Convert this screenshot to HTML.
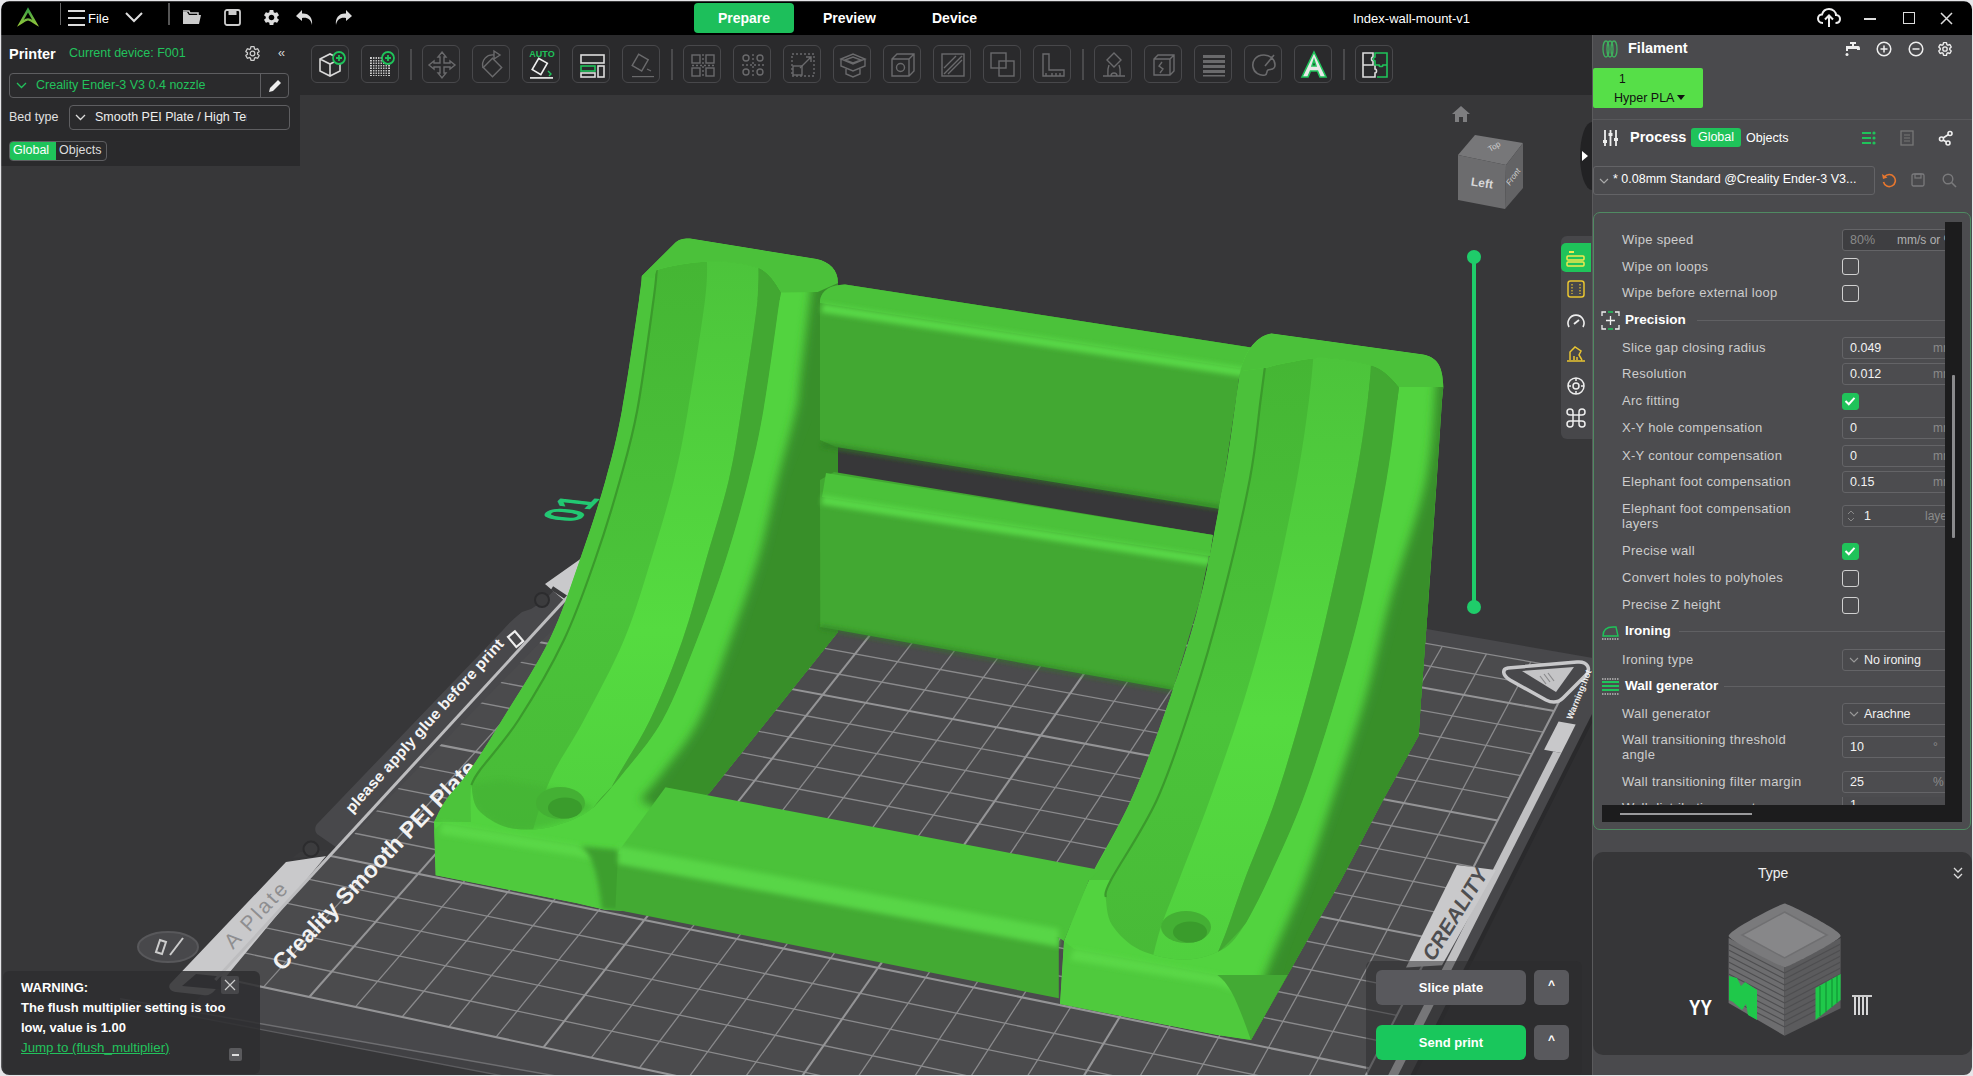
<!DOCTYPE html>
<html><head><meta charset="utf-8">
<style>
*{margin:0;padding:0;box-sizing:border-box}
html,body{width:1973px;height:1076px;overflow:hidden;background:#373739;font-family:"Liberation Sans",sans-serif;color:#ddd}
.a{position:absolute}
#scene{position:absolute;left:0;top:0}
.topbar{left:0;top:0;width:1973px;height:35px;background:#000;border-radius:8px 8px 0 0}
.tb{left:300px;top:35px;width:1292px;height:60px;background:#2a2a2c}
.lp{left:0;top:35px;width:300px;height:131px;background:#2a2a2c}
.ib{position:absolute;width:38px;height:38px;border:1.3px solid #48484b;border-radius:6px;top:45px}
.ib svg{position:absolute;left:0;top:0}
.sep{position:absolute;width:1.5px;background:#4a4a4c}
.rp{left:1592px;top:35px;width:381px;height:1041px;background:#4a4a4d;border-left:1px solid #5a5a5c}
.lbl{position:absolute;font-size:13px;color:#cdcdcd;white-space:nowrap;line-height:15px;letter-spacing:0.3px}
.hdr{position:absolute;font-size:13.5px;color:#fff;font-weight:bold;white-space:nowrap;line-height:15px}
.inp{position:absolute;left:1842px;width:112px;height:22px;border:1px solid #646467;border-radius:3px;background:#4a4a4d;font-size:12.5px;color:#f0f0f0;padding:3px 0 0 7px;white-space:nowrap;overflow:hidden}
.cb{position:absolute;left:1842px;width:17px;height:17px;border:1.6px solid #d0d0d0;border-radius:3px}
.cbon{background:#1fc35a;border-color:#1fc35a}
.unit{position:absolute;left:92px;top:3px;color:#8a8a8a;font-size:12px}
.wt{color:#fff;font-size:13.5px;white-space:nowrap;position:absolute}

</style></head><body>
<svg id="scene" width="1973" height="1076" viewBox="0 0 1973 1076">
<polygon points="1620.0,662.7 1272.5,1355.1 1600,1076 1600,726" fill="#2f2f31" />
<polygon points="165.6,1034.2 660.9,495.6 1620.0,662.7 1307.4,1285.6" fill="#48484b" />
<polygon points="120,1002.4 720,1117.6 720,1076 120,1076" fill="#363638"/>
<polygon points="120,998.7 720,1105 720,1117.6 120,1002.4" fill="#414144"/>
<path d="M120,998.7 L720,1105" stroke="#6e6e71" stroke-width="1.4"/><path d="M120,1002.4 L720,1117.6" stroke="#5c5c5f" stroke-width="1.4"/>
<polygon points="217.8,977.3 650.0,507.4 1575.6,669.6 1296.5,1209.4" fill="#4b4b4d" />
<g stroke="#8a8a8c" stroke-width="1.3"><line x1="217.8" y1="977.3" x2="650.0" y2="507.4"/><line x1="263.4" y1="987.1" x2="689.6" y2="514.3"/><line x1="241.0" y1="952.2" x2="1311.6" y2="1180.2"/><line x1="263.7" y1="927.4" x2="1326.4" y2="1151.5"/><line x1="355.5" y1="1006.9" x2="769.5" y2="528.3"/><line x1="286.1" y1="903.1" x2="1341.0" y2="1123.3"/><line x1="402.1" y1="1017.0" x2="809.7" y2="535.4"/><line x1="308.1" y1="879.2" x2="1355.3" y2="1095.6"/><line x1="448.9" y1="1027.0" x2="850.2" y2="542.5"/><line x1="496.0" y1="1037.2" x2="890.9" y2="549.6"/><line x1="351.0" y1="832.5" x2="1383.2" y2="1041.7"/><line x1="371.9" y1="809.8" x2="1396.8" y2="1015.4"/><line x1="591.3" y1="1057.7" x2="973.1" y2="564.0"/><line x1="392.5" y1="787.4" x2="1410.2" y2="989.6"/><line x1="639.4" y1="1068.0" x2="1014.5" y2="571.2"/><line x1="412.8" y1="765.3" x2="1423.3" y2="964.2"/><line x1="687.9" y1="1078.5" x2="1056.2" y2="578.5"/><line x1="736.7" y1="1089.0" x2="1098.1" y2="585.9"/><line x1="452.4" y1="722.2" x2="1448.9" y2="914.7"/><line x1="471.8" y1="701.2" x2="1461.3" y2="890.6"/><line x1="835.3" y1="1110.2" x2="1182.7" y2="600.7"/><line x1="490.8" y1="680.5" x2="1473.6" y2="866.8"/><line x1="885.1" y1="1120.9" x2="1225.3" y2="608.2"/><line x1="509.6" y1="660.1" x2="1485.7" y2="843.5"/><line x1="935.2" y1="1131.7" x2="1268.2" y2="615.7"/><line x1="985.8" y1="1142.6" x2="1311.3" y2="623.2"/><line x1="546.3" y1="620.2" x2="1509.3" y2="797.9"/><line x1="564.2" y1="600.7" x2="1520.8" y2="775.7"/><line x1="1087.9" y1="1164.5" x2="1398.4" y2="638.5"/><line x1="581.9" y1="581.5" x2="1532.1" y2="753.8"/><line x1="1139.5" y1="1175.6" x2="1442.3" y2="646.2"/><line x1="599.3" y1="562.5" x2="1543.2" y2="732.2"/><line x1="1191.4" y1="1186.8" x2="1486.5" y2="653.9"/><line x1="1243.8" y1="1198.1" x2="1530.9" y2="661.7"/><line x1="633.3" y1="525.5" x2="1565.0" y2="690.1"/><line x1="650.0" y1="507.4" x2="1575.6" y2="669.6"/></g>
<g stroke="#949496" stroke-width="2.1"><line x1="217.8" y1="977.3" x2="1296.5" y2="1209.4"/><line x1="309.3" y1="997.0" x2="729.4" y2="521.3"/><line x1="329.7" y1="855.7" x2="1369.4" y2="1068.4"/><line x1="543.5" y1="1047.4" x2="931.9" y2="556.8"/><line x1="432.8" y1="743.6" x2="1436.2" y2="939.2"/><line x1="785.8" y1="1099.5" x2="1140.3" y2="593.3"/><line x1="528.1" y1="640.0" x2="1497.6" y2="820.5"/><line x1="1036.6" y1="1153.5" x2="1354.7" y2="630.9"/><line x1="616.4" y1="543.9" x2="1554.2" y2="711.0"/><line x1="1296.5" y1="1209.4" x2="1575.6" y2="669.6"/></g>
<!-- A Plate strip -->
<path d="M170,984 L286,862 L326,856 L215,990 C212,994 208,996 203,995 L176,992 C170,991 168,987 170,984Z" fill="#c9c9cb"/>
<path d="M182,986 L196,974 L236,978 L226,990Z" fill="#3a3a3c"/>
<path d="M292,858 L300,852 L330,850 L326,856Z" fill="#3a3a3c"/>
<text x="0" y="0" font-family="Liberation Sans" font-size="21" fill="#8e8e90" letter-spacing="2.5" transform="translate(233,950) rotate(-47)">A Plate</text>
<!-- please apply glue tab -->
<path d="M317,834 C314,830 315,826 318,823 L503,630 C506,626 512,620 522,612 L531,609 L545,600 L600,540 L620,560 L357,831 L340,850Z" fill="#48484b"/>
<circle cx="311" cy="849" r="7.5" fill="#3c3c3e" stroke="#2c2c2e" stroke-width="2"/>
<circle cx="542" cy="600" r="7" fill="#3c3c3e" stroke="#2c2c2e" stroke-width="2"/>
<text x="0" y="0" font-family="Liberation Sans" font-size="15" font-weight="bold" fill="#f4f4f4" textLength="228" lengthAdjust="spacingAndGlyphs" transform="translate(352,814) rotate(-48)">please apply glue before print</text>
<rect x="0" y="0" width="9" height="13" fill="none" stroke="#eee" stroke-width="2.2" transform="translate(508,637) rotate(-40)"/>
<!-- back-left label -->
<polygon points="545,584 579,560 600,540 600,600 566,602" fill="#c9c9cb"/>
<path d="M552,588 L570,600" stroke="#3a3a3c" stroke-width="4"/>
<!-- Creality Smooth PEI Plate -->
<text x="0" y="0" font-family="Liberation Sans" font-size="23" font-weight="bold" fill="#f2f2f2" textLength="282" lengthAdjust="spacingAndGlyphs" transform="translate(282,972) rotate(-46)">Creality Smooth PEI Plate</text>
<!-- 01 -->
<text x="0" y="0" font-family="Liberation Sans" font-size="30" font-weight="bold" fill="#22c872" transform="matrix(0.72,-0.74,1.75,0.2,576.5,523)">01</text>
<!-- pencil circle -->
<ellipse cx="168" cy="947" rx="30" ry="15" fill="#48484b" stroke="#58585b" stroke-width="2"/>
<path d="M156 952 L160 940 L166 942 L162 954Z" fill="none" stroke="#ccc" stroke-width="2"/>
<path d="M170 955 L183 938" stroke="#ccc" stroke-width="2"/>
<!-- right side strips -->
<polygon points="1558.6,721.5 1575.7,724.6 1561.4,752.9 1544.1,749.8" fill="#c8c8ca"/>
<polygon points="1553.2,751.4 1561.4,752.9 1316.8,1235.6 1307.4,1233.6" fill="#c0c0c2"/>
<polygon points="1618.0,662.3 1621.9,663.0 1275.0,1355.6 1270.1,1354.5" fill="#2a2a2c"/>
<!-- CREALITY strip -->
<polygon points="1456.8,865 1495.8,870 1442,965.3 1406,967.4" fill="#c9c9cb"/>
<text x="0" y="0" font-family="Liberation Sans" font-size="21" font-weight="bold" fill="#4e4e50" textLength="104" lengthAdjust="spacingAndGlyphs" transform="translate(1433,963) rotate(-58) skewX(-10)">CREALITY</text>
<!-- warning triangle -->
<path d="M1508,668 L1577,662 C1588,661 1591,669 1586,675 L1563,698 C1558,703 1552,703 1546,700 L1510,680 C1502,675 1502,669 1508,668Z" fill="#48484b" stroke="#c8c8ca" stroke-width="3.5"/>
<path d="M1522,671 L1574,667 L1556,692Z" fill="#c4c4c6"/>
<path d="M1540,676 L1546,684 M1544,674 L1550,682 M1548,673 L1554,681" stroke="#8a8a8c" stroke-width="1.2"/>
<text x="0" y="0" font-family="Liberation Sans" font-size="9" font-weight="bold" fill="#eee" transform="translate(1572,720) rotate(-68)">Warning:hot</text>

<path d="M215.3 980.1 L650.0 507.4" stroke="#bdbdbf" stroke-width="3"/>
<defs>
<filter id="bl5" x="-20%" y="-20%" width="140%" height="140%"><feGaussianBlur stdDeviation="5"/></filter>
<filter id="bl3" x="-20%" y="-20%" width="140%" height="140%"><feGaussianBlur stdDeviation="2.5"/></filter>
<filter id="bl8" x="-20%" y="-20%" width="140%" height="140%"><feGaussianBlur stdDeviation="8"/></filter>
<linearGradient id="gLB" gradientUnits="userSpaceOnUse" x1="0" y1="262" x2="0" y2="830"><stop offset="0" stop-color="#4cc43b"/><stop offset="0.3" stop-color="#50cf3d"/><stop offset="0.65" stop-color="#55db40"/><stop offset="1" stop-color="#50d03e"/></linearGradient>
<linearGradient id="gRB" gradientUnits="userSpaceOnUse" x1="0" y1="358" x2="0" y2="960"><stop offset="0" stop-color="#4cc43b"/><stop offset="0.3" stop-color="#50cf3d"/><stop offset="0.6" stop-color="#55db40"/><stop offset="1" stop-color="#50d03e"/></linearGradient>
<linearGradient id="gLA" gradientUnits="userSpaceOnUse" x1="0" y1="262" x2="0" y2="830"><stop offset="0" stop-color="#45b634"/><stop offset="0.6" stop-color="#4bc43a"/><stop offset="1" stop-color="#48ba37"/></linearGradient>
<linearGradient id="gRA" gradientUnits="userSpaceOnUse" x1="0" y1="358" x2="0" y2="960"><stop offset="0" stop-color="#45b634"/><stop offset="0.6" stop-color="#4bc43a"/><stop offset="1" stop-color="#48ba37"/></linearGradient>
<linearGradient id="gbar" x1="0" y1="0" x2="0" y2="1"><stop offset="0" stop-color="#4cc23b"/><stop offset="0.35" stop-color="#5ad848"/><stop offset="1" stop-color="#45ae35"/></linearGradient>
</defs>
<clipPath id="clL"><path d="M641.8,276 L676,242 C680,239 685,238.6 690,238.6 L816.5,259 C830,262 838,270 838,283 L838,632 L708.7,794 L690,800 L640,860 L640,912 L605,909.8 L576,903 L435.6,875.2 L434,822 C436.0,818.3 440.0,808.7 446.0,800.0 C452.0,791.3 460.7,783.3 470.0,770.0 C479.3,756.7 488.8,741.7 502.0,720.0 C515.2,698.3 536.3,666.7 549.3,640.0 C562.3,613.3 570.4,586.7 579.8,560.0 C589.2,533.3 598.6,505.0 605.6,480.0 C612.6,455.0 616.4,440.0 622.0,410.0 C627.6,380.0 635.7,322.3 639.0,300.0 C642.3,277.7 641.3,280.0 641.8,276.0 Z"/></clipPath>
<g clip-path="url(#clL)">
<rect x="420" y="230" width="430" height="690" fill="#52d33f"/>
<path d="M812.0,283.0 C810.0,299.2 802.7,358.8 800.0,380.0 C797.3,401.2 799.8,393.3 796.0,410.0 C792.2,426.7 783.8,455.0 777.4,480.0 C771.0,505.0 765.6,533.3 757.7,560.0 C749.8,586.7 739.8,613.3 730.0,640.0 C720.2,666.7 709.9,698.3 699.0,720.0 C688.1,741.7 674.3,756.7 664.5,770.0 C654.7,783.3 644.1,795.0 640.0,800.0 L700,830 L860,640 L860,270 Z" fill="#388f29" filter="url(#bl5)"/>
<polygon points="812.0,420.0 790.0,480.0 771.0,560.0 744.0,640.0 713.0,720.0 680.0,770.0 660.0,800.0 708.7,794.0 838.0,632.0 838.0,420.0" fill="#388f29" />
<clipPath id="clLg"><path d="M781,292.5 C775,280 765,270 759,268.3 C740,262 720,261 708.7,261.8 C690,262 670,266 656.7,270 C656.2,275.0 656.7,276.7 653.5,300.0 C650.3,323.3 642.9,380.0 637.3,410.0 C631.7,440.0 627.0,455.0 620.0,480.0 C613.0,505.0 604.4,533.3 595.0,560.0 C585.6,586.7 576.6,613.3 563.9,640.0 C551.1,666.7 532.5,698.3 518.5,720.0 C504.5,741.7 487.9,759.2 480.0,770.0 C472.1,780.8 472.8,782.5 471.3,785.0 C472.4,789.1 472.1,802.4 478.0,809.4 C483.9,816.4 496.2,824.1 507.0,827.3 C517.8,830.5 531.2,829.9 542.7,828.4 C554.2,826.9 567.5,821.9 576.0,818.3 C584.5,814.7 591.0,808.9 594.0,807.0 C598.5,801.8 609.6,790.5 621.0,776.0 C632.4,761.5 649.9,742.7 662.6,720.0 C675.3,697.3 686.5,666.7 697.0,640.0 C707.5,613.3 717.1,586.7 725.7,560.0 C734.3,533.3 742.2,505.0 748.5,480.0 C754.8,455.0 758.3,440.0 763.5,410.0 C768.7,380.0 776.7,319.6 779.6,300.0 C782.5,280.4 780.8,293.8 781.0,292.5 Z"/></clipPath>
</g>
<g clip-path="url(#clLg)">
<rect x="450" y="250" width="350" height="600" fill="url(#gLA)"/>
<path d="M707.0,255.0 C706.7,262.5 708.2,274.2 705.0,300.0 C701.8,325.8 693.2,380.0 688.0,410.0 C682.8,440.0 680.2,455.0 674.0,480.0 C667.8,505.0 659.3,533.3 651.0,560.0 C642.7,586.7 635.2,613.3 624.0,640.0 C612.8,666.7 596.3,696.7 584.0,720.0 C571.7,743.3 559.0,760.0 550.0,780.0 C541.0,800.0 533.3,830.0 530.0,840.0 L590.0,840.0 C593.3,831.7 600.0,810.0 610.0,790.0 C620.0,770.0 637.9,745.0 650.0,720.0 C662.1,695.0 673.2,666.7 682.5,640.0 C691.8,613.3 698.3,586.7 706.0,560.0 C713.7,533.3 722.9,505.0 728.8,480.0 C734.7,455.0 736.6,440.0 741.4,410.0 C746.2,380.0 754.9,325.8 757.6,300.0 C760.3,274.2 757.6,262.5 757.6,255.0 Z" fill="url(#gLB)" />
<path d="M757.6,255.0 C757.6,262.5 760.3,274.2 757.6,300.0 C754.9,325.8 746.2,380.0 741.4,410.0 C736.6,440.0 734.7,455.0 728.8,480.0 C722.9,505.0 713.7,533.3 706.0,560.0 C698.3,586.7 691.8,613.3 682.5,640.0 C673.2,666.7 662.1,695.0 650.0,720.0 C637.9,745.0 620.0,770.0 610.0,790.0 C600.0,810.0 593.3,831.7 590.0,840.0 L580.0,840.0 C582.3,834.5 587.2,817.7 594.0,807.0 C600.8,796.3 609.6,790.5 621.0,776.0 C632.4,761.5 649.9,742.7 662.6,720.0 C675.3,697.3 686.5,666.7 697.0,640.0 C707.5,613.3 717.1,586.7 725.7,560.0 C734.3,533.3 742.2,505.0 748.5,480.0 C754.8,455.0 758.3,440.0 763.5,410.0 C768.7,380.0 776.7,319.6 779.6,300.0 C782.5,280.4 780.8,293.8 781.0,292.5 Z" fill="#42a832" />
<path d="M471,785 C470,805 480,815 507,827.3 C530,832 560,826 594,807 L560,790 L500,780Z" fill="#45b335" opacity="0.6" filter="url(#bl3)"/>
</g>
<g clip-path="url(#clL)">
<path d="M641.8,276.0 C641.3,280.0 642.3,277.7 639.0,300.0 C635.7,322.3 627.6,380.0 622.0,410.0 C616.4,440.0 612.6,455.0 605.6,480.0 C598.6,505.0 589.2,533.3 579.8,560.0 C570.4,586.7 562.3,613.3 549.3,640.0 C536.3,666.7 515.2,698.3 502.0,720.0 C488.8,741.7 479.3,756.7 470.0,770.0 C460.7,783.3 452.0,791.3 446.0,800.0 C440.0,808.7 436.0,818.3 434.0,822.0 L471.0,822.0 C471.1,815.8 469.8,793.7 471.3,785.0 C472.8,776.3 472.1,780.8 480.0,770.0 C487.9,759.2 504.5,741.7 518.5,720.0 C532.5,698.3 551.1,666.7 563.9,640.0 C576.6,613.3 585.6,586.7 595.0,560.0 C604.4,533.3 613.0,505.0 620.0,480.0 C627.0,455.0 631.7,440.0 637.3,410.0 C642.9,380.0 650.3,323.3 653.5,300.0 C656.7,276.7 656.2,275.0 656.7,270.0 Z" fill="#4cc43b" />
<path d="M656.7,270.0 C656.2,275.0 656.7,276.7 653.5,300.0 C650.3,323.3 642.9,380.0 637.3,410.0 C631.7,440.0 627.0,455.0 620.0,480.0 C613.0,505.0 604.4,533.3 595.0,560.0 C585.6,586.7 576.6,613.3 563.9,640.0 C551.1,666.7 532.5,698.3 518.5,720.0 C504.5,741.7 487.9,759.2 480.0,770.0 C472.1,780.8 472.8,782.5 471.3,785.0" fill="none" stroke="#3b9a2c" stroke-width="2.2"/>
<path d="M641.8,276 L676,242 C680,239 685,238.6 690,238.6 L816.5,259 C830,262 838,270 838,283 L817.7,292 L781,292.5 C775,280 765,270 759,268.3 C740,262 720,261 708.7,261.8 C690,262 670,266 656.7,270 L653.5,278 Z" fill="#4bc13a"/>
<polygon points="759.0,268.3 781.0,292.5 779.6,300.0 757.6,300.0" fill="#42a832" />
<polygon points="442.0,822.8 576.0,845.0 598.0,852.0 617.0,856.0 617.0,910.0 605.0,909.8 576.0,903.0 435.6,875.2 434.0,830.0" fill="#4fca3d" />
<path d="M442,822.8 L576,845 L598,852 L600,862 L576,856 L440,834Z" fill="#5ad847" filter="url(#bl3)"/>
<path d="M580,846 C592,852 598,875 602,909.8 L640,912 L640,856 L620,850Z" fill="#3d9f2f" filter="url(#bl3)"/>
</g>
<ellipse cx="560.5" cy="803" rx="24.5" ry="16" fill="#44b034"/>
<ellipse cx="565" cy="808" rx="17" ry="10.5" fill="#3a9c2c"/>
<path d="M820,440 L820,300 C822,290 830,285 845,284.4 L1256,348.3 L1240,371 L1236,400 L1224,480 L1220,509 L836,447Z" fill="#42a832"/>
<path d="M820,303 L820,300 C822,290 830,285 845,284.4 L1256,348.3 L1250,370Z" fill="#4bc23a"/>
<path d="M822,308 L1248,373" stroke="#59d847" stroke-width="9" filter="url(#bl3)"/>
<path d="M822,445 L1222,508" stroke="#2e7d22" stroke-width="3.5" filter="url(#bl3)"/>
<polygon points="834.0,472.0 1213.0,535.0 1200.0,600.0 1173.0,690.0 820.2,627.0 820.0,480.0" fill="#42a832" />
<polygon points="826.0,473.0 1213.0,535.0 1210.0,556.0 822.0,497.0" fill="#4bc23a" />
<path d="M822,500 L1210,561" stroke="#59d847" stroke-width="9" filter="url(#bl3)"/>
<path d="M820.2,627 L1173,690" stroke="#2e7d22" stroke-width="3" filter="url(#bl3)"/>
<clipPath id="clR"><path d="M1240.3,371.3 C1245,350 1258,335 1271.5,333.4 L1423,354.6 C1436,357 1443,365 1443.3,387 L1442,400 L1436.7,480 L1428.4,600 L1421,700 L1418.6,735.8 L1383,800 L1341,880 L1251,1040 L1217.4,1035 L1060,1004 L1064,941 C1068.2,930.8 1077.8,903.5 1089.0,880.0 C1100.2,856.5 1117.6,830.0 1131.0,800.0 C1144.4,770.0 1157.9,733.3 1169.4,700.0 C1180.9,666.7 1190.9,636.7 1200.0,600.0 C1209.1,563.3 1218.0,513.3 1224.0,480.0 C1230.0,446.7 1233.3,418.1 1236.0,400.0 C1238.7,381.9 1239.6,376.1 1240.3,371.3 Z"/></clipPath>
<g clip-path="url(#clR)">
<rect x="1050" y="320" width="400" height="730" fill="#52d33f"/>
<path d="M1436.0,380.0 C1434.3,396.7 1433.7,443.3 1426.0,480.0 C1418.3,516.7 1400.2,563.3 1390.0,600.0 C1379.8,636.7 1374.4,666.7 1364.7,700.0 C1355.0,733.3 1342.0,770.0 1332.0,800.0 C1322.0,830.0 1314.2,855.0 1304.7,880.0 C1295.2,905.0 1283.3,930.0 1275.0,950.0 C1266.7,970.0 1258.3,991.7 1255.0,1000.0 L1240,1060 L1460,1060 L1460,370 Z" fill="#388f29" filter="url(#bl5)"/>
<polygon points="1404.0,600.0 1378.0,700.0 1345.0,800.0 1318.0,880.0 1290.0,950.0 1265.0,1040.0 1460.0,1060.0 1460.0,600.0" fill="#388f29" />
</g>
<clipPath id="clRg"><path d="M1398.7,387 C1390,375 1380,368 1372,365.7 C1350,360 1330,357 1316,358 C1300,360 1280,364 1264.8,368 C1264.1,373.3 1263.1,381.3 1260.6,400.0 C1258.1,418.7 1256.1,446.7 1249.7,480.0 C1243.3,513.3 1231.5,563.3 1222.0,600.0 C1212.5,636.7 1203.9,666.7 1193.0,700.0 C1182.1,733.3 1170.5,770.0 1156.8,800.0 C1143.1,830.0 1119.5,863.8 1111.0,880.0 C1102.5,896.2 1106.4,894.2 1105.5,897.0 C1106.6,901.7 1106.2,916.2 1112.0,925.0 C1117.8,933.8 1127.7,944.2 1140.0,950.0 C1152.3,955.8 1171.8,959.9 1186.0,959.6 C1200.2,959.3 1215.0,954.1 1225.0,948.0 C1235.0,941.9 1242.5,927.2 1246.0,923.0 C1249.7,915.8 1258.5,900.5 1268.0,880.0 C1277.5,859.5 1291.5,830.0 1302.8,800.0 C1314.0,770.0 1325.5,733.3 1335.5,700.0 C1345.5,666.7 1354.2,636.7 1362.7,600.0 C1371.2,563.3 1380.7,513.3 1386.5,480.0 C1392.3,446.7 1395.4,415.5 1397.4,400.0 C1399.4,384.5 1398.5,389.2 1398.7,387.0 Z"/></clipPath>
<g clip-path="url(#clRg)">
<rect x="1090" y="350" width="320" height="620" fill="url(#gRA)"/>
<path d="M1314.0,350.0 C1313.2,358.3 1311.9,378.3 1309.0,400.0 C1306.1,421.7 1303.0,446.7 1296.8,480.0 C1290.5,513.3 1280.3,563.3 1271.5,600.0 C1262.7,636.7 1254.3,666.7 1244.0,700.0 C1233.7,733.3 1220.5,770.0 1209.7,800.0 C1198.9,830.0 1187.3,858.3 1179.0,880.0 C1170.7,901.7 1164.8,915.0 1160.0,930.0 C1155.2,945.0 1151.7,963.3 1150.0,970.0 L1210.0,970.0 C1212.5,964.2 1219.2,950.0 1225.0,935.0 C1230.8,920.0 1236.1,902.5 1244.5,880.0 C1252.9,857.5 1265.2,830.0 1275.4,800.0 C1285.6,770.0 1296.3,733.3 1305.4,700.0 C1314.5,666.7 1321.7,636.7 1330.0,600.0 C1338.3,563.3 1349.1,513.3 1355.4,480.0 C1361.7,446.7 1365.0,421.7 1367.8,400.0 C1370.6,378.3 1371.3,358.3 1372.0,350.0 Z" fill="url(#gRB)" />
<path d="M1372.0,350.0 C1371.3,358.3 1370.6,378.3 1367.8,400.0 C1365.0,421.7 1361.7,446.7 1355.4,480.0 C1349.1,513.3 1338.3,563.3 1330.0,600.0 C1321.7,636.7 1314.5,666.7 1305.4,700.0 C1296.3,733.3 1285.6,770.0 1275.4,800.0 C1265.2,830.0 1252.9,857.5 1244.5,880.0 C1236.1,902.5 1230.8,920.0 1225.0,935.0 C1219.2,950.0 1212.5,964.2 1210.0,970.0 L1200.0,970.0 C1207.7,962.2 1234.7,938.0 1246.0,923.0 C1257.3,908.0 1258.5,900.5 1268.0,880.0 C1277.5,859.5 1291.5,830.0 1302.8,800.0 C1314.0,770.0 1325.5,733.3 1335.5,700.0 C1345.5,666.7 1354.2,636.7 1362.7,600.0 C1371.2,563.3 1380.7,513.3 1386.5,480.0 C1392.3,446.7 1395.4,415.5 1397.4,400.0 C1399.4,384.5 1398.5,389.2 1398.7,387.0 Z" fill="#42a832" />
</g>
<g clip-path="url(#clR)">
<path d="M1240.3,371.3 C1239.6,376.1 1238.7,381.9 1236.0,400.0 C1233.3,418.1 1230.0,446.7 1224.0,480.0 C1218.0,513.3 1209.1,563.3 1200.0,600.0 C1190.9,636.7 1180.9,666.7 1169.4,700.0 C1157.9,733.3 1144.4,770.0 1131.0,800.0 C1117.6,830.0 1096.0,866.7 1089.0,880.0 L1111.0,880.0 C1118.6,866.7 1143.1,830.0 1156.8,800.0 C1170.5,770.0 1182.1,733.3 1193.0,700.0 C1203.9,666.7 1212.5,636.7 1222.0,600.0 C1231.5,563.3 1243.3,513.3 1249.7,480.0 C1256.1,446.7 1258.1,418.7 1260.6,400.0 C1263.1,381.3 1264.1,373.3 1264.8,368.0 Z" fill="#4bc13a" />
<path d="M1264.8,368.0 C1264.1,373.3 1263.1,381.3 1260.6,400.0 C1258.1,418.7 1256.1,446.7 1249.7,480.0 C1243.3,513.3 1231.5,563.3 1222.0,600.0 C1212.5,636.7 1203.9,666.7 1193.0,700.0 C1182.1,733.3 1170.5,770.0 1156.8,800.0 C1143.1,830.0 1119.5,863.8 1111.0,880.0 C1102.5,896.2 1106.4,894.2 1105.5,897.0" fill="none" stroke="#3b9a2c" stroke-width="2.2"/>
<path d="M1240.3,371.3 C1245,350 1258,335 1271.5,333.4 L1423,354.6 C1436,357 1443,365 1443.3,387 L1399,387 C1390,375 1380,368 1372,365.7 C1350,360 1330,357 1316,358 C1300,360 1280,364 1264.8,368 Z" fill="#4bc13a"/>
<polygon points="1372.0,365.7 1399.0,387.0 1397.4,400.0 1367.8,400.0" fill="#42a832" />
<polygon points="1074.0,949.0 1217.4,975.0 1236.0,982.0 1251.0,1040.0 1217.4,1035.0 1060.0,1004.0 1064.0,941.0" fill="#4fca3d" />
<path d="M1074,949 L1217.4,975 L1236,982 L1236,992 L1217,985 L1070,960Z" fill="#5ad847" filter="url(#bl3)"/>
<path d="M1217.4,975 C1232,985 1240,1010 1251,1040 L1290,1040 L1290,975Z" fill="#43aa34"/>
</g>
<ellipse cx="1186" cy="927" rx="25" ry="16" fill="#44b034"/>
<ellipse cx="1190" cy="932" rx="17" ry="10.5" fill="#3a9c2c"/>
<polygon points="665.5,787.3 1100.0,870.0 1089.0,880.0 1064.0,941.0 1058.8,937.4 618.0,853.8 619.5,850.0" fill="#4bc23a" />
<polygon points="618.0,853.8 1058.8,937.4 1058.8,998.2 615.3,909.5" fill="#43aa33" />
<path d="M618,846 L1058.8,929 L1058.8,947 L618,864Z" fill="#58d647" filter="url(#bl3)"/>
</svg>
<div class="a topbar"></div>
<!-- logo -->
<svg class="a" style="left:0;top:0" width="60" height="35" viewBox="0 0 60 35"><defs><linearGradient id="lg" x1="0" y1="0" x2="0" y2="1"><stop offset="0" stop-color="#2f9a45"/><stop offset="1" stop-color="#9ccc3a"/></linearGradient></defs><path fill-rule="evenodd" fill="url(#lg)" d="M28,7.3 L39,26.8 C35,24.5 31.5,21.5 28,20.5 C24.5,21.5 21,24.5 17,26.8 Z M28,12.5 L32.3,20 C31,19 29.5,18.3 28,18.3 C26.5,18.3 25,19 23.7,20 Z"/></svg>
<div class="a" style="left:60px;top:3px;width:1.2px;height:22px;background:#666"></div>
<svg class="a" style="left:68px;top:9px" width="18" height="18" viewBox="0 0 18 18"><rect x="0" y="1" width="17" height="2" fill="#ddd"/><rect x="0" y="8" width="17" height="2" fill="#ddd"/><rect x="0" y="15" width="17" height="2" fill="#ddd"/></svg>
<div class="a" style="left:88px;top:11px;font-size:13px;color:#fff">File</div>
<svg class="a" style="left:125px;top:12px" width="18" height="11" viewBox="0 0 18 11"><path d="M1 1 L9 9 L17 1" stroke="#ddd" stroke-width="2" fill="none"/></svg>
<div class="a" style="left:168px;top:3px;width:1.5px;height:22px;background:#555"></div>
<svg class="a" style="left:182px;top:9px" width="20" height="17" viewBox="0 0 20 17"><path d="M1 3 L1 15 L17 15 L19 6 L7 6 L5 3Z" fill="#ccc"/><path d="M1 2 L7 2 L8 4 L16 4 L16 6" stroke="#ccc" stroke-width="1.5" fill="none"/></svg>
<svg class="a" style="left:224px;top:9px" width="17" height="17" viewBox="0 0 17 17"><rect x="1" y="1" width="15" height="15" rx="2" fill="none" stroke="#ccc" stroke-width="1.8"/><rect x="4.5" y="1" width="8" height="5" fill="#ccc"/></svg>
<svg class="a" style="left:262px;top:8px" width="19" height="19" viewBox="0 0 24 24"><path fill="#ddd" d="M19.14 12.94c.04-.3.06-.61.06-.94 0-.32-.02-.64-.07-.94l2.03-1.58a.49.49 0 0 0 .12-.61l-1.92-3.32a.49.49 0 0 0-.59-.22l-2.39.96c-.5-.38-1.03-.7-1.62-.94l-.36-2.54a.48.48 0 0 0-.48-.41h-3.84c-.24 0-.43.17-.47.41l-.36 2.54c-.59.24-1.13.57-1.62.94l-2.39-.96a.48.48 0 0 0-.59.22L2.74 8.87c-.12.21-.08.47.12.61l2.03 1.58c-.05.3-.09.63-.09.94s.02.64.07.94l-2.03 1.58a.49.49 0 0 0-.12.61l1.92 3.32c.12.22.37.29.59.22l2.39-.96c.5.38 1.03.7 1.62.94l.36 2.54c.05.24.24.41.48.41h3.84c.24 0 .44-.17.47-.41l.36-2.54c.59-.24 1.13-.56 1.62-.94l2.39.96c.22.08.47 0 .59-.22l1.92-3.32c.12-.22.07-.47-.12-.61l-2.01-1.58zM12 15.6c-1.98 0-3.6-1.62-3.6-3.6s1.62-3.6 3.6-3.6 3.6 1.62 3.6 3.6-1.62 3.6-3.6 3.6z"/></svg>
<svg class="a" style="left:295px;top:9px" width="19" height="17" viewBox="0 0 19 17"><path d="M7 1 L1 7 L7 12 L7 9 C12 8 16 10 17 16 C18 9 14 4 7 4.5Z" fill="#ddd"/></svg>
<svg class="a" style="left:334px;top:9px" width="19" height="17" viewBox="0 0 19 17"><path d="M12 1 L18 7 L12 12 L12 9 C7 8 3 10 2 16 C1 9 5 4 12 4.5Z" fill="#ddd"/></svg>
<div class="a" style="left:694px;top:3px;width:100px;height:30px;background:#1dbf5b;border-radius:4px;color:#fff;font-weight:bold;font-size:14px;text-align:center;line-height:30px">Prepare</div>
<div class="a" style="left:823px;top:10px;color:#fff;font-weight:bold;font-size:14px">Preview</div>
<div class="a" style="left:932px;top:10px;color:#fff;font-weight:bold;font-size:14px">Device</div>
<div class="a" style="left:1353px;top:11px;color:#fff;font-size:13px">Index-wall-mount-v1</div>
<svg class="a" style="left:1817px;top:8px" width="24" height="20" viewBox="0 0 24 20"><path d="M6 15 C2 15 1 12 1 10.5 C1 8 3 6.5 5 6.5 C6 3 9 1 12 1 C16 1 19 4 19 7 C22 7 23 9.5 23 11 C23 13.5 21 15 18.5 15" stroke="#eee" stroke-width="2" fill="none"/><path d="M12 19 L12 8 M8 11.5 L12 7.5 L16 11.5" stroke="#eee" stroke-width="2" fill="none"/></svg>
<div class="a" style="left:1864px;top:18px;width:12px;height:1.5px;background:#ddd"></div>
<div class="a" style="left:1903px;top:12px;width:12px;height:12px;border:1.5px solid #ddd"></div>
<svg class="a" style="left:1940px;top:12px" width="13" height="13" viewBox="0 0 13 13"><path d="M1 1 L12 12 M12 1 L1 12" stroke="#ddd" stroke-width="1.5"/></svg>

<div class="a tb"></div>
<div class="a lp"></div>
<!-- toolbar buttons -->
<div class="ib" style="left:311px"><svg width="38" height="38" viewBox="0 0 38 38"><path d="M8 13 L18 8 L28 13 L28 25 L18 30 L8 25Z M8 13 L18 18 L28 13 M18 18 L18 30" stroke="#d8d8d8" stroke-width="1.6" fill="none"/><circle cx="27" cy="12" r="6" fill="#2a2a2c" stroke="#1fc35a" stroke-width="1.8"/><path d="M27 9 L27 15 M24 12 L30 12" stroke="#1fc35a" stroke-width="1.8"/></svg></div>
<div class="ib" style="left:361px"><svg width="38" height="38" viewBox="0 0 38 38"><g fill="#d0d0d0"><rect x="8" y="11" width="20" height="19"/></g><g stroke="#2a2a2c" stroke-width="1.2"><path d="M10.5 11v19M13 11v19M15.5 11v19M18 11v19M20.5 11v19M23 11v19M25.5 11v19M8 13.5h20M8 16h20M8 18.5h20M8 21h20M8 23.5h20M8 26h20M8 28.5h20"/></g><circle cx="26" cy="12" r="6" fill="#2a2a2c" stroke="#1fc35a" stroke-width="1.8"/><path d="M26 9 L26 15 M23 12 L29 12" stroke="#1fc35a" stroke-width="1.8"/></svg></div>
<div class="sep" style="left:410px;top:49px;height:31px"></div>
<div class="ib" style="left:422px"><svg width="38" height="38" viewBox="0 0 38 38"><path d="M19 6 L23 11 L21 11 L21 17 L27 17 L27 15 L32 19 L27 23 L27 21 L21 21 L21 27 L23 27 L19 32 L15 27 L17 27 L17 21 L11 21 L11 23 L6 19 L11 15 L11 17 L17 17 L17 11 L15 11Z" stroke="#6a6a6c" stroke-width="1.4" fill="none"/></svg></div>
<div class="ib" style="left:472px"><svg width="38" height="38" viewBox="0 0 38 38"><path d="M10 22 C8 14 14 8 21 9" stroke="#6a6a6c" stroke-width="1.4" fill="none"/><path d="M21 5 L27 9 L21 13Z" fill="none" stroke="#6a6a6c" stroke-width="1.4"/><rect x="13" y="15" width="13" height="13" transform="rotate(45 19.5 21.5)" fill="none" stroke="#6a6a6c" stroke-width="1.4"/></svg></div>
<div class="ib" style="left:522px"><svg width="38" height="38" viewBox="0 0 38 38"><text x="19" y="11" font-size="9" font-weight="bold" fill="#1fc35a" text-anchor="middle" font-family="Liberation Sans">AUTO</text><rect x="12" y="14" width="10" height="13" transform="rotate(30 17 20)" fill="none" stroke="#eee" stroke-width="1.6"/><path d="M25 25 L28 28 L26 30" stroke="#1fc35a" stroke-width="1.4" fill="none"/><rect x="7" y="31" width="23" height="1.8" fill="#ddd"/></svg></div>
<div class="ib" style="left:572px"><svg width="38" height="38" viewBox="0 0 38 38"><rect x="8" y="9" width="23" height="8" fill="none" stroke="#ddd" stroke-width="1.6"/><rect x="8" y="20" width="14" height="5" fill="none" stroke="#1fc35a" stroke-width="1.6"/><rect x="8" y="27" width="14" height="4" fill="none" stroke="#ddd" stroke-width="1.6"/><rect x="25" y="20" width="6" height="11" fill="none" stroke="#ddd" stroke-width="1.6"/></svg></div>
<div class="ib" style="left:622px"><svg width="38" height="38" viewBox="0 0 38 38"><rect x="12" y="10" width="11" height="13" transform="rotate(30 17 16)" fill="none" stroke="#6a6a6c" stroke-width="1.4"/><path d="M24 23 L28 25" stroke="#6a6a6c" stroke-width="1.2"/><rect x="9" y="30" width="22" height="1.2" fill="#6a6a6c"/></svg></div>
<div class="sep" style="left:671px;top:49px;height:31px"></div>
<div class="ib" style="left:683px"><svg width="38" height="38" viewBox="0 0 38 38"><g fill="none" stroke="#6a6a6c" stroke-width="1.4"><rect x="8" y="9" width="8" height="8"/><rect x="22" y="9" width="8" height="8"/><rect x="8" y="22" width="8" height="8"/><rect x="22" y="22" width="8" height="8"/><path d="M19 8v22M8 19.5h22" stroke-dasharray="2 2"/></g></svg></div>
<div class="ib" style="left:733px"><svg width="38" height="38" viewBox="0 0 38 38"><g fill="none" stroke="#6a6a6c" stroke-width="1.4"><circle cx="12" cy="12" r="3"/><circle cx="26" cy="12" r="3"/><circle cx="12" cy="26" r="3"/><circle cx="26" cy="26" r="3"/><path d="M19 8v22M8 19h22" stroke-dasharray="2 2"/></g></svg></div>
<div class="ib" style="left:783px"><svg width="38" height="38" viewBox="0 0 38 38"><g fill="none" stroke="#6a6a6c" stroke-width="1.4"><rect x="8" y="8" width="22" height="22" stroke-dasharray="2 2"/><rect x="9" y="20" width="9" height="9"/><path d="M16 22 L27 11 M22 11h5v5"/></g></svg></div>
<div class="ib" style="left:833px"><svg width="38" height="38" viewBox="0 0 38 38"><g fill="none" stroke="#6a6a6c" stroke-width="1.4"><path d="M7 13 L19 8 L31 13 L19 18Z M7 13 L7 20 L19 25 L31 20 L31 13 M11 14 L19 11 L27 14 L19 17Z M12 23 L12 28 L19 31 L26 28 L26 23"/></g></svg></div>
<div class="ib" style="left:883px"><svg width="38" height="38" viewBox="0 0 38 38"><g fill="none" stroke="#6a6a6c" stroke-width="1.4"><path d="M8 13 L13 8 L30 8 L30 25 L25 30 L8 30Z M8 13 L25 13 L25 30 M25 13 L30 8"/><circle cx="16.5" cy="21.5" r="4"/></g></svg></div>
<div class="ib" style="left:933px"><svg width="38" height="38" viewBox="0 0 38 38"><g fill="none" stroke="#6a6a6c" stroke-width="1.4"><rect x="8" y="8" width="22" height="22"/><path d="M10 28 L28 10 M14 28 L28 14 M10 22 L22 10"/></g></svg></div>
<div class="ib" style="left:983px"><svg width="38" height="38" viewBox="0 0 38 38"><g fill="none" stroke="#6a6a6c" stroke-width="1.4"><rect x="7" y="7" width="15" height="15"/><rect x="15" y="15" width="15" height="15"/></g></svg></div>
<div class="ib" style="left:1033px"><svg width="38" height="38" viewBox="0 0 38 38"><g fill="none" stroke="#6a6a6c" stroke-width="1.4"><path d="M9 8 L15 8 L15 24 L30 24 L30 30 L9 30Z M12 27v3M18 27v3M22 27v3M26 27v3"/></g></svg></div>
<div class="sep" style="left:1082px;top:49px;height:31px"></div>
<div class="ib" style="left:1094px"><svg width="38" height="38" viewBox="0 0 38 38"><g fill="none" stroke="#6a6a6c" stroke-width="1.4"><path d="M19 7 L26 14 L19 21 L12 14Z M14 19 C12 24 13 27 13 30 M24 19 C26 24 25 27 25 30 M8 30h22 M16 30 C16 26 22 26 22 30"/></g></svg></div>
<div class="ib" style="left:1144px"><svg width="38" height="38" viewBox="0 0 38 38"><g fill="none" stroke="#6a6a6c" stroke-width="1.4"><path d="M9 13 L13 9 L29 9 L29 25 L25 29 L9 29Z M9 13 L25 13 L25 29 M25 13 L29 9 M17 16 L14 20 L18 23 L15 27"/></g></svg></div>
<div class="ib" style="left:1194px"><svg width="38" height="38" viewBox="0 0 38 38"><g fill="#6a6a6c"><rect x="8" y="9" width="22" height="3"/><rect x="8" y="14" width="22" height="3"/><rect x="8" y="19" width="22" height="3"/><rect x="8" y="24" width="22" height="3"/><rect x="8" y="29" width="22" height="1.5"/></g></svg></div>
<div class="ib" style="left:1244px"><svg width="38" height="38" viewBox="0 0 38 38"><g fill="none" stroke="#6a6a6c" stroke-width="1.6"><path d="M19 9 C10 9 7 16 8 21 C9 27 15 30 20 29 C23 28 21 25 23 24 C26 23 30 24 30 19 C30 13 25 9 19 9Z M20 20 L29 9"/></g></svg></div>
<div class="ib" style="left:1294px"><svg width="38" height="38" viewBox="0 0 38 38"><path d="M19 6 L31 31 L25 31 L22.5 25 L15.5 25 L13 31 L7 31Z M17 20 L21 20 L19 14Z" fill="#e8e8e8" stroke="#1fc35a" stroke-width="1.6" fill-rule="evenodd"/></svg></div>
<div class="sep" style="left:1343px;top:49px;height:31px"></div>
<div class="ib" style="left:1355px"><svg width="38" height="38" viewBox="0 0 38 38"><g fill="none" stroke-width="1.6"><path d="M7 7 L17 7 L17 11 C15 11 15 15 17 15 L17 19 L7 19Z M7 19 L7 31 L19 31 L19 27 C21 27 21 23 19 23 L19 19" stroke="#ddd"/><path d="M21 7 L31 7 L31 19 L27 19 C27 21 23 21 23 19 L19 19 L19 15 C17 15 17 11 19 11 L19 7Z M31 19 L31 31 L21 31" stroke="#1fc35a"/></g></svg></div>
<!-- left printer panel -->
<div class="a" style="left:9px;top:46px;font-size:14.5px;font-weight:bold;color:#fff">Printer</div>
<div class="a" style="left:69px;top:46px;font-size:12.5px;color:#22c25c">Current device: F001</div>
<svg class="a" style="left:244px;top:45px" width="17" height="17" viewBox="0 0 24 24"><path fill="none" stroke="#cfcfcf" stroke-width="1.8" d="M19.14 12.94c.04-.3.06-.61.06-.94 0-.32-.02-.64-.07-.94l2.03-1.58a.49.49 0 0 0 .12-.61l-1.92-3.32a.49.49 0 0 0-.59-.22l-2.39.96c-.5-.38-1.03-.7-1.62-.94l-.36-2.54a.48.48 0 0 0-.48-.41h-3.84c-.24 0-.43.17-.47.41l-.36 2.54c-.59.24-1.130.57-1.62.94l-2.39-.96a.48.48 0 0 0-.59.22L2.74 8.870c-.12.21-.08.47.12.61l2.03 1.58c-.05.3-.09.63-.09.94s.02.64.07.94l-2.03 1.58a.49.49 0 0 0-.12.61l1.92 3.32c.12.22.37.29.59.22l2.39-.96c.5.38 1.03.7 1.62.94l.36 2.54c.05.24.24.41.48.41h3.84c.24 0 .44-.17.47-.41l.36-2.54c.59-.24 1.13-.56 1.62-.94l2.39.96c.22.08.47 0 .59-.22l1.92-3.32c.12-.22.07-.47-.12-.61l-2.010-1.58z"/><circle cx="12" cy="12" r="3.3" fill="none" stroke="#cfcfcf" stroke-width="1.8"/></svg>
<div class="a" style="left:278px;top:46px;font-size:12px;color:#ddd;letter-spacing:-1px">&#8249;&#8249;</div>
<div class="a" style="left:9px;top:73px;width:280px;height:25px;border:1px solid #5e5e61;border-radius:4px"></div>
<div class="a" style="left:260px;top:73px;width:1px;height:25px;background:#5e5e61"></div>
<svg class="a" style="left:16px;top:82px" width="11" height="7" viewBox="0 0 11 7"><path d="M1 1 L5.5 5.5 L10 1" stroke="#22c25c" stroke-width="1.3" fill="none"/></svg>
<div class="a" style="left:36px;top:78px;font-size:12.5px;color:#22c25c">Creality Ender-3 V3 0.4 nozzle</div>
<svg class="a" style="left:267px;top:78px" width="16" height="16" viewBox="0 0 16 16"><path d="M2 14 L3 10 L11 2 L14 5 L6 13Z" fill="#eee"/></svg>
<div class="a" style="left:9px;top:110px;font-size:12.5px;color:#e0e0e0">Bed type</div>
<div class="a" style="left:69px;top:105px;width:221px;height:25px;border:1px solid #5e5e61;border-radius:4px"></div>
<svg class="a" style="left:75px;top:114px" width="11" height="7" viewBox="0 0 11 7"><path d="M1 1 L5.5 5.5 L10 1" stroke="#ddd" stroke-width="1.3" fill="none"/></svg>
<div class="a" style="left:95px;top:110px;font-size:12.5px;color:#eee;width:152px;overflow:hidden;white-space:nowrap">Smooth PEI Plate / High Temp Plate</div>
<div class="a" style="left:9px;top:141px;width:98px;height:20px;border:1px solid #5e5e61;border-radius:4px;overflow:hidden"><div class="a" style="left:0;top:0;width:46px;height:20px;background:#1fc35a"></div></div>
<div class="a" style="left:13px;top:143px;font-size:12.5px;color:#fff">Global</div>
<div class="a" style="left:59px;top:143px;font-size:12.5px;color:#ddd">Objects</div>
<!-- right panel -->
<div class="a rp"></div>
<svg class="a" style="left:1602px;top:40px" width="16" height="18" viewBox="0 0 16 18"><g fill="none" stroke="#3fae5e" stroke-width="1.3"><ellipse cx="4" cy="9" rx="3" ry="8"/><ellipse cx="8" cy="9" rx="3" ry="8"/><ellipse cx="12" cy="9" rx="3" ry="8"/></g></svg>
<div class="hdr" style="left:1628px;top:41px;font-size:14.5px">Filament</div>
<svg class="a" style="left:1844px;top:41px" width="17" height="16" viewBox="0 0 17 16"><path d="M2 5 L8 5 L8 3 L6 3 L6 1 L12 1 L12 3 L10 3 L10 5 L14 5 C16 5 16 7 16 9 L13 9 L13 8 L4 8 L4 10 L2 10Z" fill="#eee"/><circle cx="3" cy="13.5" r="1.5" fill="#eee"/></svg>
<svg class="a" style="left:1876px;top:41px" width="16" height="16" viewBox="0 0 16 16"><circle cx="8" cy="8" r="6.8" fill="none" stroke="#eee" stroke-width="1.5"/><path d="M8 4.5v7M4.5 8h7" stroke="#eee" stroke-width="1.5"/></svg>
<svg class="a" style="left:1908px;top:41px" width="16" height="16" viewBox="0 0 16 16"><circle cx="8" cy="8" r="6.8" fill="none" stroke="#eee" stroke-width="1.5"/><path d="M4.5 8h7" stroke="#eee" stroke-width="1.5"/></svg>
<svg class="a" style="left:1937px;top:41px" width="16" height="16" viewBox="0 0 24 24"><path fill="none" stroke="#eee" stroke-width="2" d="M19.14 12.94c.04-.3.06-.61.06-.94 0-.32-.02-.64-.07-.94l2.03-1.58a.49.49 0 0 0 .12-.61l-1.92-3.32a.49.49 0 0 0-.59-.22l-2.39.96c-.5-.38-1.03-.7-1.62-.94l-.36-2.54a.48.48 0 0 0-.48-.41h-3.84c-.24 0-.43.17-.47.41l-.36 2.54c-.59.24-1.13.57-1.62.94l-2.39-.96a.48.48 0 0 0-.59.22L2.74 8.87c-.12.21-.08.47.12.61l2.03 1.58c-.05.3-.09.63-.09.94s.02.64.07.94l-2.03 1.58a.49.49 0 0 0-.12.61l1.92 3.32c.12.22.37.29.59.22l2.39-.96c.5.38 1.03.7 1.62.94l.36 2.54c.05.24.24.41.48.41h3.84c.24 0 .44-.17.47-.41l.36-2.54c.59-.24 1.13-.56 1.62-.94l2.39.96c.22.08.47 0 .59-.22l1.92-3.32c.12-.22.07-.47-.12-.61l-2.01-1.58z"/><circle cx="12" cy="12" r="3.3" fill="none" stroke="#eee" stroke-width="2"/></svg>
<div class="a" style="left:1593px;top:68px;width:110px;height:40px;background:#56df48;border-radius:2px"></div>
<div class="a" style="left:1619px;top:72px;font-size:12px;color:#111">1</div>
<div class="a" style="left:1614px;top:91px;font-size:12.5px;color:#111">Hyper PLA</div>
<svg class="a" style="left:1677px;top:95px" width="8" height="5" viewBox="0 0 8 5"><path d="M0 0 L8 0 L4 5Z" fill="#111"/></svg>
<div class="a" style="left:1593px;top:119px;width:380px;height:1px;background:#58585b"></div>
<svg class="a" style="left:1602px;top:129px" width="17" height="18" viewBox="0 0 17 18"><g stroke="#eee" stroke-width="1.8"><path d="M3 1v16M8.5 1v16M14 1v16"/></g><g fill="#eee"><rect x="1" y="11" width="4" height="3"/><rect x="6.5" y="4" width="4" height="3"/><rect x="12" y="9" width="4" height="3"/></g></svg>
<div class="hdr" style="left:1630px;top:130px;font-size:14.5px">Process</div>
<div class="a" style="left:1691px;top:128px;width:50px;height:19px;background:#1fc35a;border-radius:3px;color:#fff;font-size:12.5px;text-align:center;line-height:19px">Global</div>
<div class="a" style="left:1746px;top:131px;font-size:12.5px;color:#fff">Objects</div>
<svg class="a" style="left:1861px;top:130px" width="16" height="16" viewBox="0 0 16 16"><g fill="#1fc35a"><rect x="1" y="2" width="9" height="2"/><rect x="1" y="7" width="9" height="2"/><rect x="1" y="12" width="9" height="2"/><circle cx="13" cy="3" r="1.6"/><circle cx="13" cy="8" r="1.6"/><circle cx="13" cy="13" r="1.6"/></g></svg>
<svg class="a" style="left:1900px;top:130px" width="14" height="16" viewBox="0 0 14 16"><rect x="1" y="1" width="12" height="14" fill="none" stroke="#777" stroke-width="1.3"/><path d="M4 5h6M4 8h6M4 11h6" stroke="#777" stroke-width="1"/></svg>
<svg class="a" style="left:1938px;top:130px" width="16" height="16" viewBox="0 0 16 16"><g fill="none" stroke="#eee" stroke-width="1.6"><circle cx="3.5" cy="9" r="2"/><circle cx="12" cy="3.5" r="2"/><circle cx="10" cy="13" r="2"/><path d="M5 8 L10.5 4.5 M5 10 L8.5 12"/></g></svg>
<div class="a" style="left:1593px;top:166px;width:282px;height:29px;border:1px solid #636366;border-radius:3px"></div>
<svg class="a" style="left:1599px;top:178px" width="10" height="6" viewBox="0 0 10 6"><path d="M1 1 L5 5 L9 1" stroke="#aaa" stroke-width="1.2" fill="none"/></svg>
<div class="a" style="left:1613px;top:172px;font-size:12.5px;color:#fff;white-space:nowrap">* 0.08mm Standard @Creality Ender-3 V3...</div>
<svg class="a" style="left:1881px;top:172px" width="16" height="16" viewBox="0 0 16 16"><path d="M3.5 5 A6 6 0 1 1 2.5 10" fill="none" stroke="#e8772e" stroke-width="1.6"/><path d="M1 2 L2 7 L6.5 5.5Z" fill="#e8772e"/></svg>
<svg class="a" style="left:1911px;top:173px" width="14" height="14" viewBox="0 0 14 14"><rect x="1" y="1" width="12" height="12" rx="1.5" fill="none" stroke="#7a7a7c" stroke-width="1.3"/><rect x="4" y="1" width="6" height="4" fill="none" stroke="#7a7a7c" stroke-width="1.2"/></svg>
<svg class="a" style="left:1942px;top:173px" width="15" height="15" viewBox="0 0 15 15"><circle cx="6" cy="6" r="4.8" fill="none" stroke="#7a7a7c" stroke-width="1.4"/><path d="M9.5 9.5 L14 14" stroke="#7a7a7c" stroke-width="1.6"/></svg>
<!-- settings box -->
<div class="a" style="left:1593px;top:212px;width:378px;height:618px;border:1px solid #4f8a62;border-radius:7px;background:#4c4c4f"></div>
<div class="lbl" style="left:1622px;top:231.5px">Wipe speed</div>
<div class="inp" style="top:228.5px;background:#3e3e41;color:#8a8a8a">80%<span class="unit" style="left:54px;color:#b0b0b0">mm/s or %</span></div>
<div class="lbl" style="left:1622px;top:258.6px">Wipe on loops</div>
<div class="cb" style="top:258.1px"></div>
<div class="lbl" style="left:1622px;top:285.4px">Wipe before external loop</div>
<div class="cb" style="top:284.9px"></div>
<div class="a" style="left:1601px;top:310.6px;width:19px;height:19px"><svg width="19" height="19" viewBox="0 0 19 19"><g fill="none" stroke="#eee" stroke-width="1.3"><path d="M1 5V1h4M14 1h4v4M18 14v4h-4M5 18H1v-4"/></g><path d="M9.5 5v9M5 9.5h9" stroke="#eee" stroke-width="1.3"/><g stroke="#1fc35a" stroke-width="1.3"><path d="M7 1h5M7 18h5"/></g></svg></div>
<div class="hdr" style="left:1625px;top:311.6px">Precision</div>
<div class="a" style="left:1697px;top:319.6px;width:248px;height:1px;background:#606063"></div>
<div class="lbl" style="left:1622px;top:339.5px">Slice gap closing radius</div>
<div class="inp" style="top:336.5px;background:#4c4c4f;color:#f2f2f2">0.049<span class="unit" style="left:90px;color:#8a8a8a">mm</span></div>
<div class="lbl" style="left:1622px;top:366.3px">Resolution</div>
<div class="inp" style="top:363.3px;background:#4c4c4f;color:#f2f2f2">0.012<span class="unit" style="left:90px;color:#8a8a8a">mm</span></div>
<div class="lbl" style="left:1622px;top:393.4px">Arc fitting</div>
<div class="cb cbon" style="top:392.9px"><svg width="14" height="14" viewBox="0 0 14 14" style="position:absolute;left:0;top:0"><path d="M2.5 7 L5.8 10.2 L11.5 3.8" stroke="#fff" stroke-width="2" fill="none"/></svg></div>
<div class="lbl" style="left:1622px;top:420.4px">X-Y hole compensation</div>
<div class="inp" style="top:417.4px;background:#4c4c4f;color:#f2f2f2">0<span class="unit" style="left:90px;color:#8a8a8a">mm</span></div>
<div class="lbl" style="left:1622px;top:447.5px">X-Y contour compensation</div>
<div class="inp" style="top:444.5px;background:#4c4c4f;color:#f2f2f2">0<span class="unit" style="left:90px;color:#8a8a8a">mm</span></div>
<div class="lbl" style="left:1622px;top:474.3px">Elephant foot compensation</div>
<div class="inp" style="top:471.3px;background:#4c4c4f;color:#f2f2f2">0.15<span class="unit" style="left:90px;color:#8a8a8a">mm</span></div>
<div class="lbl" style="left:1622px;top:501px;line-height:15px">Elephant foot compensation<br>layers</div>
<div class="inp" style="top:505px;padding-left:21px">1<span class="unit" style="left:82px">layers</span></div>
<svg class="a" style="left:1847px;top:509px" width="8" height="14" viewBox="0 0 8 14"><path d="M1 5 L4 2 L7 5 M1 9 L4 12 L7 9" stroke="#888" stroke-width="1" fill="none"/></svg>
<div class="lbl" style="left:1622px;top:543px">Precise wall</div>
<div class="cb cbon" style="top:542.5px"><svg width="14" height="14" viewBox="0 0 14 14" style="position:absolute;left:0;top:0"><path d="M2.5 7 L5.8 10.2 L11.5 3.8" stroke="#fff" stroke-width="2" fill="none"/></svg></div>
<div class="lbl" style="left:1622px;top:570.4px">Convert holes to polyholes</div>
<div class="cb" style="top:569.9px"></div>
<div class="lbl" style="left:1622px;top:597px">Precise Z height</div>
<div class="cb" style="top:596.5px"></div>
<div class="a" style="left:1601px;top:622.4px;width:19px;height:19px"><svg width="19" height="19" viewBox="0 0 19 19"><path d="M2 14 C2 8 6 5 12 5 L15 5 L17 14Z" fill="none" stroke="#1fc35a" stroke-width="1.4"/><path d="M1 17h17" stroke="#eee" stroke-width="1.2" stroke-dasharray="1.5 1"/></svg></div>
<div class="hdr" style="left:1625px;top:623.4px">Ironing</div>
<div class="a" style="left:1679px;top:631.4px;width:266px;height:1px;background:#606063"></div>
<div class="lbl" style="left:1622px;top:651.6px">Ironing type</div>
<div class="inp" style="top:648.6px;padding-left:21px">No ironing</div>
<svg class="a" style="left:1849px;top:656.6px" width="10" height="6" viewBox="0 0 10 6"><path d="M1 1 L5 5 L9 1" stroke="#999" stroke-width="1.1" fill="none"/></svg>
<div class="a" style="left:1601px;top:676.5px;width:19px;height:19px"><svg width="19" height="19" viewBox="0 0 19 19"><g fill="#1fc35a"><rect x="1" y="4" width="17" height="2"/><rect x="1" y="8" width="17" height="2"/><rect x="1" y="12" width="17" height="2"/></g><path d="M1 2h17M1 17h17" stroke="#eee" stroke-width="1" stroke-dasharray="1.5 1"/></svg></div>
<div class="hdr" style="left:1625px;top:677.5px">Wall generator</div>
<div class="a" style="left:1724px;top:685.5px;width:221px;height:1px;background:#606063"></div>
<div class="lbl" style="left:1622px;top:705.6px">Wall generator</div>
<div class="inp" style="top:702.6px;padding-left:21px">Arachne</div>
<svg class="a" style="left:1849px;top:710.6px" width="10" height="6" viewBox="0 0 10 6"><path d="M1 1 L5 5 L9 1" stroke="#999" stroke-width="1.1" fill="none"/></svg>
<div class="lbl" style="left:1622px;top:732px;line-height:15px">Wall transitioning threshold<br>angle</div>
<div class="inp" style="top:736px;background:#4c4c4f;color:#f2f2f2">10<span class="unit" style="left:90px;color:#8a8a8a">°</span></div>
<div class="lbl" style="left:1622px;top:774px">Wall transitioning filter margin</div>
<div class="inp" style="top:771px;background:#4c4c4f;color:#f2f2f2">25<span class="unit" style="left:90px;color:#8a8a8a">%</span></div>
<div class="a" style="left:1602px;top:797px;width:343px;height:8px;overflow:hidden"><div class="lbl" style="left:20px;top:3px">Wall distribution count</div><div class="inp" style="left:240px;top:-3px">1</div></div><div class="a" style="left:1945px;top:222px;width:17px;height:600px;background:#1c1c1d"></div>
<div class="a" style="left:1952px;top:375px;width:2.5px;height:163px;background:#8a8a8c;border-radius:1px"></div>
<div class="a" style="left:1602px;top:805px;width:343px;height:17px;background:#1c1c1d"></div>
<div class="a" style="left:1620px;top:813px;width:132px;height:2px;background:#9a9a9c"></div>
<!-- sidebar icons -->
<div class="a" style="left:1561px;top:236px;width:31px;height:203px;background:#47474a;border-radius:6px 0 0 6px"></div>
<div class="a" style="left:1561px;top:243px;width:30px;height:29px;background:#1fc35a;border-radius:5px 0 0 5px"></div>
<svg class="a" style="left:1565px;top:247px" width="22" height="22" viewBox="0 0 22 22"><g fill="none" stroke="#f2e94e" stroke-width="1.5"><rect x="2" y="9" width="17" height="4" rx="1"/><rect x="2" y="15" width="17" height="4" rx="1"/></g><rect x="4" y="4" width="5" height="2" fill="#f2e94e"/></svg>
<svg class="a" style="left:1566px;top:279px" width="20" height="20" viewBox="0 0 20 20"><rect x="2" y="2" width="16" height="16" rx="2.5" fill="none" stroke="#e9c531" stroke-width="1.5"/><path d="M6 5v10M14 5v10" stroke="#e9c531" stroke-width="1.2" stroke-dasharray="1.5 1.5"/></svg>
<svg class="a" style="left:1566px;top:312px" width="20" height="20" viewBox="0 0 20 20"><path d="M3 15 A8 8 0 1 1 17 15" fill="none" stroke="#eee" stroke-width="1.6"/><path d="M8 12 L13 8" stroke="#eee" stroke-width="1.8"/></svg>
<svg class="a" style="left:1566px;top:343px" width="20" height="20" viewBox="0 0 20 20"><g fill="none" stroke="#e9c531" stroke-width="1.5"><path d="M4 17 L4 9 L9 4 L15 8 L13 12 L16 17 M1 18h18 M8 17v-4 M11 17v-3"/></g></svg>
<svg class="a" style="left:1566px;top:376px" width="20" height="20" viewBox="0 0 20 20"><g fill="none" stroke="#eee" stroke-width="1.5"><circle cx="10" cy="10" r="8"/><circle cx="10" cy="10" r="3"/><path d="M10 2v3M10 15v3M2 10h3M15 10h3"/></g></svg>
<svg class="a" style="left:1566px;top:408px" width="20" height="20" viewBox="0 0 20 20"><g fill="none" stroke="#eee" stroke-width="1.5"><path d="M7 7 L7 4 A3 3 0 1 0 4 7Z M13 7 L16 7 A3 3 0 1 0 13 4Z M7 13 L4 13 A3 3 0 1 0 7 16Z M13 13 L13 16 A3 3 0 1 0 16 13Z M7 7h6v6H7z"/></g></svg>
<!-- collapse handle -->
<div class="a" style="left:1580px;top:122px;width:12px;height:68px;background:#222224;border-radius:12px 0 0 12px / 34px 0 0 34px"></div>
<svg class="a" style="left:1582px;top:151px" width="6" height="10" viewBox="0 0 6 10"><path d="M0 0 L6 5 L0 10Z" fill="#fff"/></svg>
<!-- home & cube -->
<svg class="a" style="left:1451px;top:105px" width="20" height="18" viewBox="0 0 20 18"><path d="M10 1 L19 9 L16 9 L16 17 L12 17 L12 12 L8 12 L8 17 L4 17 L4 9 L1 9Z" fill="#7e7e80"/></svg>
<svg class="a" style="left:1450px;top:128px" width="80" height="86" viewBox="1450 128 80 86">
<polygon points="1458,155 1475,135 1523,143 1506,165" fill="#777779"/>
<polygon points="1458,155 1506,165 1505,209 1458,200" fill="#6c6c6e"/>
<polygon points="1506,165 1523,143 1523,188 1505,209" fill="#636365"/>
<text x="1482" y="187" font-family="Liberation Sans" font-size="12" font-weight="bold" fill="#d8d8d8" text-anchor="middle" transform="rotate(8 1482 183)">Left</text>
<text x="1490" y="152" font-family="Liberation Sans" font-size="8" fill="#cfcfcf" transform="rotate(-30 1490 152)">Top</text>
<text x="1510" y="186" font-family="Liberation Sans" font-size="8" font-style="italic" fill="#cfcfcf" transform="rotate(-55 1510 186)">Front</text>
</svg>
<!-- slider -->
<div class="a" style="left:1472px;top:257px;width:4px;height:350px;background:#1fcc6a"></div>
<div class="a" style="left:1467px;top:250px;width:14px;height:14px;border-radius:50%;background:#1fcc6a"></div>
<div class="a" style="left:1467px;top:600px;width:14px;height:14px;border-radius:50%;background:#1fcc6a"></div>
<!-- type panel -->
<div class="a" style="left:1593px;top:852px;width:379px;height:203px;background:#363638;border-radius:10px"></div>
<div class="a" style="left:1758px;top:865px;font-size:14px;color:#f0f0f0">Type</div>
<svg class="a" style="left:1953px;top:867px" width="10" height="13" viewBox="0 0 10 13"><path d="M1 1 L5 5 L9 1 M1 7 L5 11 L9 7" stroke="#ddd" stroke-width="1.3" fill="none"/></svg>
<!-- type cube -->
<svg class="a" style="left:1680px;top:895px" width="200" height="150" viewBox="1680 895 200 150">
<path d="M1728.6,1003 L1728.6,938 L1784.6,967.2 L1784.6,1035.8Z" fill="#6d6d6f"/>
<path d="M1784.6,967.2 L1840.6,938 L1840.6,1008.3 L1784.6,1035.8Z" fill="#5b5b5d"/>
<g stroke="#4e4e50" stroke-width="1.2">
<path d="M1728.6,944 L1784.6,973 M1728.6,950 L1784.6,979 M1728.6,956 L1784.6,985 M1728.6,962 L1784.6,991 M1728.6,968 L1784.6,997 M1728.6,974 L1784.6,1003 M1728.6,980 L1784.6,1009 M1728.6,986 L1784.6,1015 M1728.6,992 L1784.6,1021 M1728.6,998 L1784.6,1027"/>
<path d="M1784.6,973 L1840.6,944 M1784.6,979 L1840.6,950 M1784.6,985 L1840.6,956 M1784.6,991 L1840.6,962 M1784.6,997 L1840.6,968 M1784.6,1003 L1840.6,974 M1784.6,1009 L1840.6,980 M1784.6,1015 L1840.6,986 M1784.6,1021 L1840.6,992 M1784.6,1027 L1840.6,998"/>
</g>
<path d="M1784.6,903.6 C1788,903.6 1840.6,930 1840.6,936 C1840.6,940 1788,967.2 1784.6,967.2 C1781,967.2 1728.6,940 1728.6,936 C1728.6,930 1781,903.6 1784.6,903.6Z" fill="#7a7a7c"/>
<path d="M1784.6,912 L1827,935 L1784.6,958 L1742,935Z" fill="#878789" stroke="#6f6f71" stroke-width="1.5"/>
<path d="M1729,976 L1737,978 L1741,986 L1745,982 L1757,990 L1757,1020 L1748,1015 L1746,1004 L1742,1010 L1733,1002 L1729,1000Z" fill="#1fc84a"/>
<path d="M1815.5,988 L1840.6,974 L1840.6,1000 L1815.5,1020Z" fill="#1fc84a"/>
<g stroke="#0f8a30" stroke-width="1"><path d="M1820,986v30M1826,982v30M1832,979v28M1837,976v27"/></g>
<text x="1689" y="1015" font-family="Liberation Sans" font-weight="bold" font-size="22" fill="#fff" textLength="23" lengthAdjust="spacingAndGlyphs">YY</text>
<path d="M1852,996 L1872,996 M1855,997v18M1859,997v18M1863,997v18M1867,997v18" stroke="#fff" stroke-width="1.6"/>
</svg>
<!-- warning box -->
<div class="a" style="left:3px;top:971px;width:257px;height:103px;background:rgba(46,46,48,0.85);border-radius:6px"></div>
<div class="a" style="left:21px;top:980px;font-size:13px;font-weight:bold;color:#fff">WARNING:</div>
<div class="a" style="left:21px;top:1000px;font-size:13px;font-weight:bold;color:#fff">The flush multiplier setting is too</div>
<div class="a" style="left:21px;top:1020px;font-size:13px;font-weight:bold;color:#fff">low, value is 1.00</div>
<div class="a" style="left:21px;top:1040px;font-size:13.3px;color:#22c25c;text-decoration:underline">Jump to (flush_multiplier)</div>
<div class="a" style="left:221px;top:976px;width:18px;height:18px;background:#47474a;border-radius:2px"></div>
<svg class="a" style="left:224px;top:979px" width="12" height="12" viewBox="0 0 12 12"><path d="M1 1 L11 11 M11 1 L1 11" stroke="#ccc" stroke-width="1.2"/></svg>
<div class="a" style="left:229px;top:1048px;width:13px;height:13px;background:#5a5a5d;border-radius:2px"></div>
<div class="a" style="left:232px;top:1054px;width:7px;height:1.5px;background:#ddd"></div>
<!-- slice/send -->
<div class="a" style="left:1366px;top:961px;width:216px;height:115px;background:rgba(44,44,46,0.5);border-radius:6px"></div>
<div class="a" style="left:1376px;top:970px;width:150px;height:35px;background:#59595d;border-radius:6px;color:#fff;font-weight:bold;font-size:13px;text-align:center;line-height:35px">Slice plate</div>
<div class="a" style="left:1534px;top:970px;width:35px;height:35px;background:#59595d;border-radius:5px;color:#fff;font-weight:bold;font-size:12px;text-align:center;line-height:30px">^</div>
<div class="a" style="left:1376px;top:1025px;width:150px;height:35px;background:#19c75c;border-radius:6px;color:#fff;font-weight:bold;font-size:13px;text-align:center;line-height:35px">Send print</div>
<div class="a" style="left:1534px;top:1025px;width:35px;height:35px;background:#59595d;border-radius:5px;color:#fff;font-weight:bold;font-size:12px;text-align:center;line-height:30px">^</div>
<!-- window frame -->
<svg class="a" style="left:0;top:0" width="1973" height="1076" viewBox="0 0 1973 1076"><path fill-rule="evenodd" fill="#e6e6e9" d="M0,0 H1973 V1076 H0Z M9,1.2 H1964 A8,8 0 0 1 1972,9.2 V1067 A8,8 0 0 1 1964,1075 H9.2 A8,8 0 0 1 1.2,1067 V9.2 A8,8 0 0 1 9.2,1.2Z"/></svg>

</body></html>
